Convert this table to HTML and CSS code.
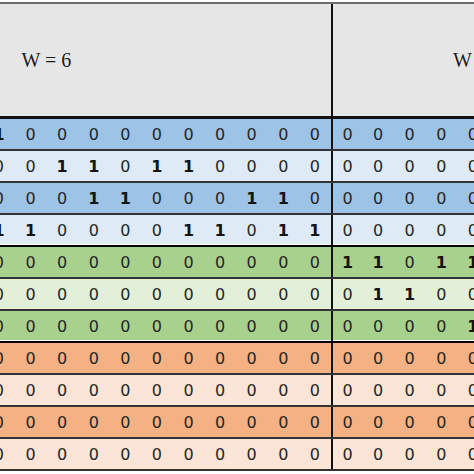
FILE: index.html
```html
<!DOCTYPE html>
<html lang="en">
<head>
  <meta charset="UTF-8">
  <meta name="viewport" content="width=device-width, initial-scale=1.0">
  <link rel="stylesheet" href="styles.css">
  <title>Window Table</title>
</head>
<body>
  <div class="sheet">
    <div class="row header">
      <div class="head head-left">W = 6</div>
      <div class="head head-right">W = 7</div>
    </div>
    <div class="rows"></div>
  </div>

  <script>
    // colour of row, left window (18 cols), right window (9 cols)
    const data = [
      ['blue-dark',    '000000010000000000', '000000000', ''],
      ['blue-light',   '000000000110110000', '000000000', ''],
      ['blue-dark',    '000000000011000110', '000000000', ''],
      ['blue-light',   '000000011000011011', '000000000', 'group-end'],
      ['green-dark',   '000000000000000000', '110110000', ''],
      ['green-light',  '000000000000000000', '011000000', ''],
      ['green-dark',   '000000000000000000', '000010000', 'group-end'],
      ['orange-dark',  '000000000000000000', '000000000', ''],
      ['orange-light', '000000000000000000', '000000000', ''],
      ['orange-dark',  '000000000000000000', '000000000', ''],
      ['orange-light', '000000000000000000', '000000000', '']
    ];

    let out = '';
    for (let r of data) {
      out += `<div class="row ${r[0]} ${r[3]}">`;
      for (let ch of r[1]) {
        out += `<div class="cell ${ch == '1' ? 'one' : ''}">${ch}</div>`;
      }
      for (let i = 0; i < r[2].length; i++) {
        let ch = r[2][i];
        out += `<div class="cell ${i == 0 ? 'split' : ''} ${ch == '1' ? 'one' : ''}">${ch}</div>`;
      }
      out += `</div>`;
    }
    document.querySelector('.rows').innerHTML = out;
  </script>
</body>
</html>
```

FILE: styles.css
```css
html, body {
  margin: 0;
  padding: 0;
  background-color: #ffffff;
  overflow: hidden;
}
.sheet {
  width: 474px;
  height: 474px;
  overflow: hidden;
  padding-top: 2px;
  box-sizing: border-box;
}
.row {
  display: flex;
  margin-left: -238px;
  width: 853.2px;
}
.header {
  background-color: #e7e6e6;
  border-top: 2px solid #6b6b6b;
  border-bottom: 3px solid #111111;
}
.head {
  flex: none;
  height: 112px;
  display: flex;
  align-items: center;
  justify-content: center;
  font-family: "Liberation Serif", "Times New Roman", serif;
  font-size: 20px;
  color: #1e1e1e;
  box-sizing: border-box;
}
.head-left {
  width: 568.8px;
}
.head-right {
  width: 284.4px;
  border-left: 2px solid #111111;
  padding-left: 8px;
}
.cell {
  flex: none;
  width: 31.6px;
  height: 30px;
  box-sizing: border-box;
  display: flex;
  align-items: center;
  justify-content: center;
  font-family: "DejaVu Sans", sans-serif;
  font-size: 16px;
  color: #262626;
}
.cell.one {
  font-weight: bold;
  color: #141414;
}
.cell.split {
  border-left: 2px solid #111111;
}
.rows .row {
  border-bottom: 2px solid #333333;
}
.rows .row.group-end {
  border-bottom: 2px solid #000000;
  box-shadow: inset 0 -1px 0 #ffffff;
}
.blue-dark { background-color: #9dc3e6; }
.blue-light { background-color: #deebf7; }
.green-dark { background-color: #a9d18e; }
.green-light { background-color: #e2f0d9; }
.orange-dark { background-color: #f4b183; }
.orange-light { background-color: #fbe5d6; }
```
